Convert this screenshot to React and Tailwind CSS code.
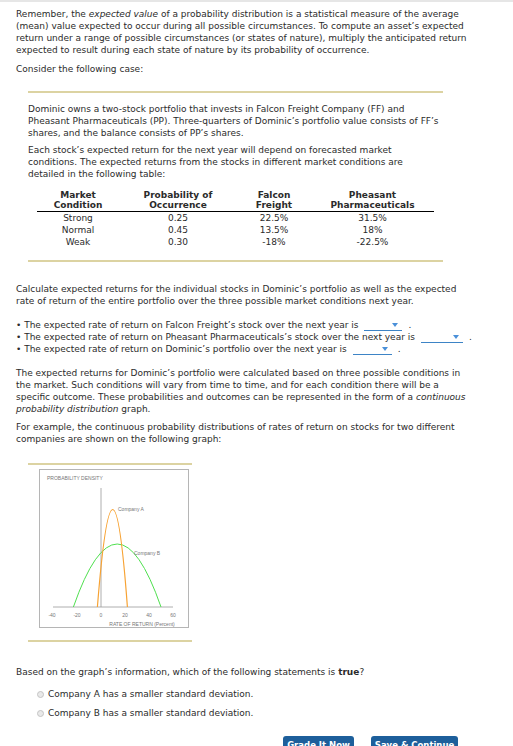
import React from 'react';

const font = { fontFamily: '"DejaVu Sans", Verdana, sans-serif' };

const Dropdown = ({ w }) => (
    <span className={`inline-flex items-start justify-end align-baseline border-b border-[#3d84c6] h-[11px] mx-[6px] ${w}`}>
        <svg width="6" height="4" viewBox="0 0 6 4" className="mt-[3px] mr-[4px]">
            <path d="M0 0 L6 0 L3 4 Z" fill="#4a90d9" />
        </svg>
    </span>
);

const Chart = () => (
    <div className="ml-[39px] mt-[4px] w-[150px] h-[159px] border border-[#b5b5b5] bg-white">
        <svg width="148" height="157" viewBox="0 0 148 157" style={{ fontFamily: '"Liberation Sans", Arial, sans-serif' }}>
            <text x="7" y="10" fontSize="5" fill="#777">PROBABILITY DENSITY</text>
            <line x1="61" y1="18" x2="61" y2="137" stroke="#999" strokeWidth="0.8" />
            <line x1="13" y1="137" x2="133" y2="137" stroke="#999" strokeWidth="0.8" />
            <path d="M33.4 137 Q77.2 11 121 137" fill="none" stroke="#4fe04f" strokeWidth="1" />
            <path d="M57.4 137 Q73 -58 87.4 137" fill="none" stroke="#f7a232" strokeWidth="1.2" />
            <text x="78" y="41" fontSize="5" fill="#777">Company A</text>
            <text x="94" y="85" fontSize="5" fill="#777">Company B</text>
            {[[-40, 12], [-20, 37], [0, 61], [20, 85], [40, 109], [60, 133]].map(([v, x]) => (
                <text key={v} x={x} y="147" fontSize="5" fill="#777" textAnchor="middle">{v}</text>
            ))}
            <text x="102" y="156" fontSize="5" fill="#777" textAnchor="middle">RATE OF RETURN (Percent)</text>
        </svg>
    </div>
);

const rows = [
    ['Strong', '0.25', '22.5%', '31.5%'],
    ['Normal', '0.45', '13.5%', '18%'],
    ['Weak', '0.30', '-18%', '-22.5%'],
];

const cols = 'grid grid-cols-[82px_118px_74px_123px] text-center';

export default function App() {
    return (
        <div className="w-[513px] h-[746px] overflow-hidden bg-white text-[#2b2b2b] text-[9px] leading-[12px]" style={font}>
            <div className="h-[2px] bg-[#e6e6e6]" />

            {/* intro */}
            <div className="pl-[16px] pt-[6px] whitespace-nowrap">
                <p>
                    Remember, the <i>expected value</i> of a probability distribution is a statistical measure of the average<br />
                    (mean) value expected to occur during all possible circumstances. To compute an asset’s expected<br />
                    return under a range of possible circumstances (or states of nature), multiply the anticipated return<br />
                    expected to result during each state of nature by its probability of occurrence.
                </p>
                <p className="mt-[7px]">Consider the following case:</p>
            </div>

            {/* case box */}
            <div className="ml-[28px] w-[415px] mt-[16px] h-[2px] bg-[#dcd3a2]" />
            <div className="pl-[28px] pt-[10px] whitespace-nowrap">
                <p>
                    Dominic owns a two-stock portfolio that invests in Falcon Freight Company (FF) and<br />
                    Pheasant Pharmaceuticals (PP). Three-quarters of Dominic’s portfolio value consists of FF’s<br />
                    shares, and the balance consists of PP’s shares.
                </p>
                <p className="mt-[5px]">
                    Each stock’s expected return for the next year will depend on forecasted market<br />
                    conditions. The expected returns from the stocks in different market conditions are<br />
                    detailed in the following table:
                </p>
            </div>
            <div className="ml-[37px] mt-[10px] w-[397px]">
                <div className={`${cols} font-bold leading-[10px] border-b border-black pb-[1px]`}>
                    <div>Market<br />Condition</div>
                    <div>Probability of<br />Occurrence</div>
                    <div>Falcon<br />Freight</div>
                    <div>Pheasant<br />Pharmaceuticals</div>
                </div>
                {rows.map((r) => (
                    <div key={r[0]} className={cols}>
                        {r.map((c, i) => <div key={i}>{c}</div>)}
                    </div>
                ))}
            </div>
            <div className="ml-[28px] w-[415px] mt-[12px] h-[2px] bg-[#dcd3a2]" />

            {/* questions */}
            <div className="pl-[16px] pt-[21px] whitespace-nowrap">
                <p>
                    Calculate expected returns for the individual stocks in Dominic’s portfolio as well as the expected<br />
                    rate of return of the entire portfolio over the three possible market conditions next year.
                </p>
                <ul className="mt-[12px]">
                    <li className="flex items-end">• The expected rate of return on Falcon Freight’s stock over the next year is<Dropdown w="w-[38px]" />.</li>
                    <li className="flex items-end">• The expected rate of return on Pheasant Pharmaceuticals’s stock over the next year is<Dropdown w="w-[42px]" />.</li>
                    <li className="flex items-end">• The expected rate of return on Dominic’s portfolio over the next year is<Dropdown w="w-[39px]" />.</li>
                </ul>
                <p className="mt-[12px]">
                    The expected returns for Dominic’s portfolio were calculated based on three possible conditions in<br />
                    the market. Such conditions will vary from time to time, and for each condition there will be a<br />
                    specific outcome. These probabilities and outcomes can be represented in the form of a <i>continuous</i><br />
                    <i>probability distribution</i> graph.
                </p>
                <p className="mt-[6px]">
                    For example, the continuous probability distributions of rates of return on stocks for two different<br />
                    companies are shown on the following graph:
                </p>
            </div>

            {/* graph */}
            <div className="ml-[28px] w-[164px] mt-[18px] h-[2px] bg-[#dcd3a2]" />
            <Chart />
            <div className="ml-[28px] w-[164px] mt-[12px] h-[2px] bg-[#dcd3a2]" />

            <div className="pl-[16px] pt-[24px] whitespace-nowrap">
                <p>Based on the graph’s information, which of the following statements is <b>true</b>?</p>
                <div className="mt-[10px] pl-[21px] flex flex-col gap-[7px]">
                    {['Company A has a smaller standard deviation.', 'Company B has a smaller standard deviation.'].map((t) => (
                        <label key={t} className="flex items-center gap-[4px]">
                            <span className="w-[7px] h-[7px] rounded-full border border-[#c4c4c4] bg-[#e9e9e9]" />
                            {t}
                        </label>
                    ))}
                </div>
            </div>

            <div className="flex pl-[283px] gap-[17px] mt-[17px]">
                <button className="w-[71px] h-[22px] bg-[#1d5f9b] text-white font-bold text-[8.5px] rounded-t-[3px] pt-[3px] leading-[12px] flex justify-center items-start">Grade It Now</button>
                <button className="w-[87px] h-[22px] bg-[#1d5f9b] text-white font-bold text-[8.5px] rounded-t-[3px] pt-[3px] leading-[12px] flex justify-center items-start">Save &amp; Continue</button>
            </div>
        </div>
    );
}
